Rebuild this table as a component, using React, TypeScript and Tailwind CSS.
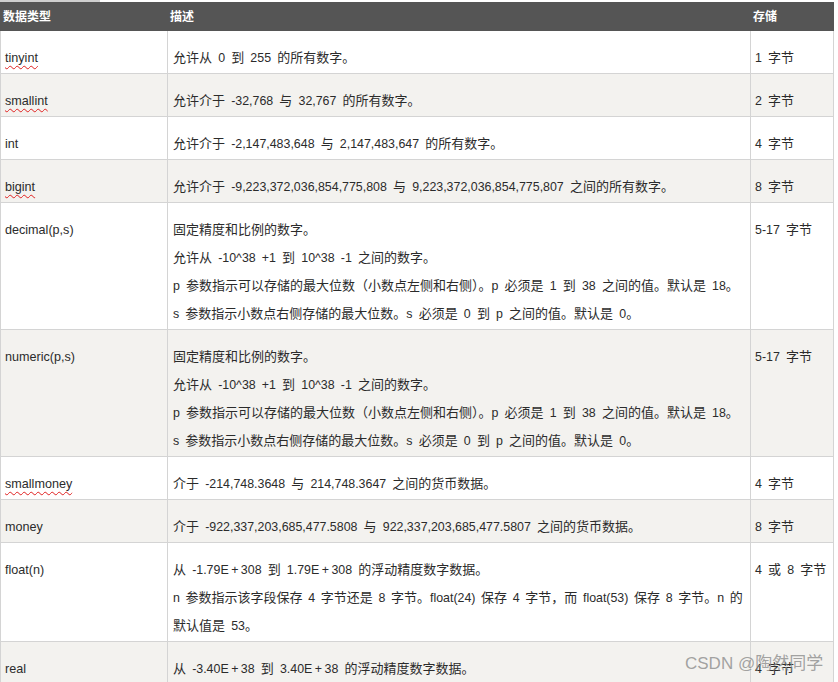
const rows = [
  { name: "tinyint", wavy: true, desc: ["允许从 0 到 255 的所有数字。"], size: "1 字节" },
  { name: "smallint", wavy: true, desc: ["允许介于 -32,768 与 32,767 的所有数字。"], size: "2 字节" },
  { name: "int", desc: ["允许介于 -2,147,483,648 与 2,147,483,647 的所有数字。"], size: "4 字节" },
  {
    name: "bigint",
    wavy: true,
    desc: ["允许介于 -9,223,372,036,854,775,808 与 9,223,372,036,854,775,807 之间的所有数字。"],
    size: "8 字节",
  },
  {
    name: "decimal(p,s)",
    desc: [
      "固定精度和比例的数字。",
      "允许从 -10^38 +1 到 10^38 -1 之间的数字。",
      "p 参数指示可以存储的最大位数（小数点左侧和右侧）。p 必须是 1 到 38 之间的值。默认是 18。",
      "s 参数指示小数点右侧存储的最大位数。s 必须是 0 到 p 之间的值。默认是 0。",
    ],
    size: "5-17 字节",
  },
  {
    name: "numeric(p,s)",
    desc: [
      "固定精度和比例的数字。",
      "允许从 -10^38 +1 到 10^38 -1 之间的数字。",
      "p 参数指示可以存储的最大位数（小数点左侧和右侧）。p 必须是 1 到 38 之间的值。默认是 18。",
      "s 参数指示小数点右侧存储的最大位数。s 必须是 0 到 p 之间的值。默认是 0。",
    ],
    size: "5-17 字节",
  },
  { name: "smallmoney", wavy: true, desc: ["介于 -214,748.3648 与 214,748.3647 之间的货币数据。"], size: "4 字节" },
  {
    name: "money",
    desc: ["介于 -922,337,203,685,477.5808 与 922,337,203,685,477.5807 之间的货币数据。"],
    size: "8 字节",
  },
  {
    name: "float(n)",
    desc: ["从 -1.79E\u2009+\u2009308 到 1.79E\u2009+\u2009308 的浮动精度数字数据。"],
    // justified line in the original, then the wrapped remainder
    justified: "n 参数指示该字段保存 4 字节还是 8 字节。float(24) 保存 4 字节，而 float(53) 保存 8 字节。n 的",
    rest: "默认值是 53。",
    size: "4 或 8 字节",
  },
  { name: "real", desc: ["从 -3.40E\u2009+\u200938 到 3.40E\u2009+\u200938 的浮动精度数字数据。"], size: "4 字节" },
];

const CJK = /([\u3000-\u303f\u4e00-\u9fff\uff00-\uffef]+)/;

// latin runs are a touch smaller than the chinese ones in the original
const Mixed = ({ text }: { text: string }) => (
  <>
    {text
      .split(CJK)
      .filter(Boolean)
      .map((part, k) =>
        CJK.test(part) ? (
          <span key={k}>{part}</span>
        ) : (
          <span key={k} className="text-[12.4px]">
            {part}
          </span>
        )
      )}
  </>
);

export default function App() {
  return (
    <div
      className="relative w-[838px] h-[682px] overflow-hidden bg-white text-[13px] text-[#2b2b2b] [word-spacing:2.7px]"
      style={{ fontFamily: '"Liberation Sans", "Noto Sans CJK SC", sans-serif' }}
    >
      <div className="h-[2px] w-[100px] bg-[#cfcfcf]" />

      <div className="w-[834px]">
        {/* header */}
        <div className="flex h-[29px] items-center bg-[#555555] font-bold text-white text-[12px] [word-spacing:0px]">
          <div className="w-[168px] pl-[3px]">数据类型</div>
          <div className="w-[583px] pl-[2px]">描述</div>
          <div className="flex-1 pl-[2px]">存储</div>
        </div>

        {/* body */}
        <div className="border-l border-[#d4d4d4]">
          {rows.map((row, i) => (
            <div
              key={i}
              className={`flex border-b border-[#d4d4d4] leading-[28px] ${i % 2 === 1 ? "bg-[#f3f2ef]" : "bg-white"}`}
            >
              <div className="w-[167px] border-r border-[#d4d4d4] pl-[4px] pt-[13px] pb-[1px] text-[12.6px]">
                <span className={row.wavy ? "underline decoration-wavy decoration-[#e02020] decoration-1 underline-offset-[3px]" : ""}>
                  {row.name}
                </span>
              </div>
              <div className="w-[583px] border-r border-[#d4d4d4] pl-[5px] pr-[7px] pt-[13px] pb-[1px]">
                {row.desc.map((line, j) => (
                  <p key={j} className="whitespace-nowrap">
                    <Mixed text={line} />
                  </p>
                ))}
                {row.justified && (
                  <>
                    <p className="flex justify-between whitespace-nowrap">
                      {row.justified.split(" ").map((w, k) => (
                        <span key={k}>
                          <Mixed text={w} />
                        </span>
                      ))}
                    </p>
                    <p>
                      <Mixed text={row.rest} />
                    </p>
                  </>
                )}
              </div>
              <div className="w-[83px] border-r border-[#d4d4d4] pl-[4px] pt-[13px] pb-[1px] whitespace-nowrap">
                <Mixed text={row.size} />
              </div>
            </div>
          ))}
        </div>
      </div>

      {/* watermark */}
      <div className="absolute left-[685px] top-[651px] text-[17px] text-[#8c8c8c]/80 [word-spacing:0px]">
        CSDN @陶然同学
      </div>
    </div>
  );
}
